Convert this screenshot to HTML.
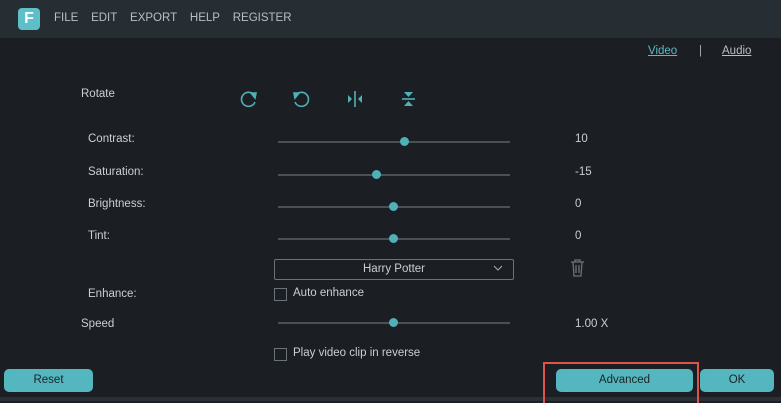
<!DOCTYPE html><html><head><style>
body{margin:0;width:781px;height:401px;background:#1b1f23;font-family:"Liberation Sans",sans-serif;font-size:11.5px;color:#c9cfd4;position:relative;overflow:hidden}
.a{position:absolute;white-space:nowrap}
.hd{position:absolute;left:0;top:0;width:781px;height:38px;background:#262d33}
.tr{position:absolute;left:278px;width:232px;height:2px;background:#4a5156}
.kn{position:absolute;width:9px;height:9px;border-radius:50%;background:#4fb0b8}
.btn{position:absolute;top:369px;height:23px;background:#54b7bf;border-radius:5px;color:#1b2226;text-align:center;line-height:23px;font-size:11.5px}
.cb{position:absolute;width:11px;height:11px;border:1px solid #6a737a}
</style></head><body>
<div class="hd"></div>
<div class="a" style="left:18px;top:8px;width:22px;height:22px;background:#5dbfc7;border-radius:4px;color:#fff;font-weight:bold;font-size:16px;text-align:center;line-height:22px">F</div>
<div class="a" style="left:54px;top:12px;color:#b8bfc5;font-size:11.5px">FILE&nbsp;&nbsp;&nbsp;&nbsp;EDIT&nbsp;&nbsp;&nbsp;&nbsp;EXPORT&nbsp;&nbsp;&nbsp;&nbsp;HELP&nbsp;&nbsp;&nbsp;&nbsp;REGISTER</div>
<div class="a" style="left:648px;top:45px;color:#5db9c2;text-decoration:underline">Video</div>
<div class="a" style="left:699px;top:45px;color:#aab">|</div>
<div class="a" style="left:722px;top:45px;color:#b8bfc5;text-decoration:underline">Audio</div>
<div class="a" style="left:81px;top:88px">Rotate</div>
<svg class="a" style="left:238px;top:88px" width="185" height="22" fill="none" stroke="#4fb0b8" stroke-width="1.6">
<path d="M16 7 A7 7 0 1 0 17 14"/><path d="M13 5 L18 5 L17 10Z" fill="#4fb0b8"/>
<path d="M58 7 A7 7 0 1 1 57 14"/><path d="M61 5 L56 5 L57 10Z" fill="#4fb0b8"/>
<path d="M117 3 V19"/><path d="M110 7 L114 11 L110 15Z M124 7 L120 11 L124 15Z" fill="#4fb0b8" stroke="none"/>
<path d="M164 11 H177"/><path d="M166 4 H175 L170.5 9Z M166 18 H175 L170.5 13Z" fill="#4fb0b8" stroke="none"/>
</svg>
<div class="a" style="left:88px;top:133px">Contrast:</div>
<div class="tr" style="top:141px"></div><div class="kn" style="left:400px;top:137px"></div>
<div class="a" style="left:575px;top:133px">10</div>
<div class="a" style="left:88px;top:166px">Saturation:</div>
<div class="tr" style="top:174px"></div><div class="kn" style="left:372px;top:170px"></div>
<div class="a" style="left:575px;top:166px">-15</div>
<div class="a" style="left:88px;top:198px">Brightness:</div>
<div class="tr" style="top:206px"></div><div class="kn" style="left:389px;top:202px"></div>
<div class="a" style="left:575px;top:198px">0</div>
<div class="a" style="left:88px;top:230px">Tint:</div>
<div class="tr" style="top:238px"></div><div class="kn" style="left:389px;top:234px"></div>
<div class="a" style="left:575px;top:230px">0</div>
<div class="a" style="left:274px;top:259px;width:238px;height:19px;border:1px solid #6a737a;border-radius:2px;text-align:center;line-height:19px">Harry Potter</div>
<svg class="a" style="left:493px;top:265px" width="10" height="6" fill="none" stroke="#aab" stroke-width="1"><path d="M1 1 L5 5 L9 1"/></svg>
<svg class="a" style="left:570px;top:259px" width="15" height="18" fill="none" stroke="#6a737a" stroke-width="1.3"><path d="M1 3 H14 M5 3 V1 H10 V3 M3 3 L4 17 H11 L12 3 M6 6 V14 M9 6 V14"/></svg>
<div class="a" style="left:88px;top:288px">Enhance:</div>
<div class="cb" style="left:274px;top:288px"></div><div class="a" style="left:293px;top:287px">Auto enhance</div>
<div class="a" style="left:81px;top:318px">Speed</div>
<div class="tr" style="top:322px"></div><div class="kn" style="left:389px;top:318px"></div>
<div class="a" style="left:575px;top:318px">1.00 X</div>
<div class="cb" style="left:274px;top:348px"></div><div class="a" style="left:293px;top:347px">Play video clip in reverse</div>
<div class="btn" style="left:4px;width:89px">Reset</div>
<div class="btn" style="left:556px;width:137px">Advanced</div>
<div class="btn" style="left:700px;width:74px">OK</div>
<div class="a" style="left:0;top:397px;width:781px;height:4px;background:#2a3035"></div>
<div class="a" style="left:543px;top:362px;width:152px;height:39px;border:2px solid #e0524c;border-bottom:none"></div>
</body></html>
